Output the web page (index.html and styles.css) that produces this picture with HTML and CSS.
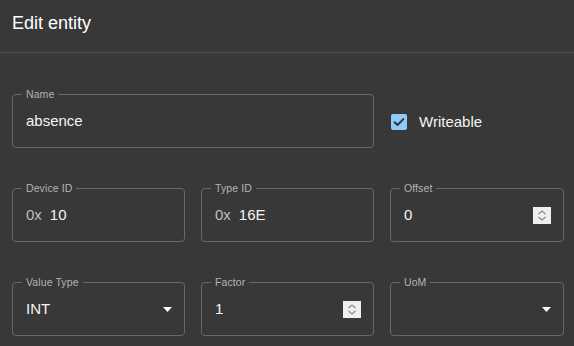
FILE: index.html
```html
<!DOCTYPE html>
<html lang="en">
<head>
<meta charset="utf-8">
<title>Edit entity</title>
<link rel="stylesheet" href="styles.css">
</head>
<body>
<div class="dialog">
  <header class="title">Edit entity</header>
  <main class="form">
    <div class="field span2">
      <span class="label">Name</span>
      <span class="value">absence</span>
    </div>
    <label class="check">
      <span class="box">
        <svg width="16" height="16" viewBox="0 0 16 16"><path d="M3.6 8.2 6.5 11 12.4 5.1" fill="none" stroke="#2f3338" stroke-width="1.9" stroke-linecap="round" stroke-linejoin="round"/></svg>
      </span>
      <span class="check-text">Writeable</span>
    </label>

    <div class="field">
      <span class="label">Device ID</span>
      <span class="prefix">0x</span><span class="value">10</span>
    </div>
    <div class="field">
      <span class="label">Type ID</span>
      <span class="prefix">0x</span><span class="value">16E</span>
    </div>
    <div class="field">
      <span class="label">Offset</span>
      <span class="value grow">0</span>
      <span class="spin"><svg width="18" height="17" viewBox="0 0 18 17"><path d="M5.5 7 9 4 12.5 7M5.5 10 9 13 12.5 10" fill="none" stroke="#8a8a8f" stroke-width="1.2"/></svg></span>
    </div>

    <div class="field">
      <span class="label">Value Type</span>
      <span class="value grow">INT</span>
      <svg class="arrow" width="9" height="5" viewBox="0 0 9 5"><path d="M0 0h9L4.5 5z" fill="#fff"/></svg>
    </div>
    <div class="field">
      <span class="label">Factor</span>
      <span class="value grow">1</span>
      <span class="spin"><svg width="18" height="17" viewBox="0 0 18 17"><path d="M5.5 7 9 4 12.5 7M5.5 10 9 13 12.5 10" fill="none" stroke="#8a8a8f" stroke-width="1.2"/></svg></span>
    </div>
    <div class="field">
      <span class="label">UoM</span>
      <span class="value grow"></span>
      <svg class="arrow" width="9" height="5" viewBox="0 0 9 5"><path d="M0 0h9L4.5 5z" fill="#fff"/></svg>
    </div>
  </main>
</div>
</body>
</html>
```

FILE: styles.css
```css
html, body {
  margin: 0;
  padding: 0;
  background: #383838;
  color: #fff;
  font-family: "Liberation Sans", Arial, sans-serif;
}

.dialog {
  width: 574px;
  height: 346px;
  overflow: hidden;
}

.title {
  box-sizing: border-box;
  height: 53px;
  padding: 12px 12px 0;
  font-size: 18px;
  line-height: 22px;
  border-bottom: 1px solid #525252;
}

.form {
  display: grid;
  grid-template-columns: 173px 173px 1fr;
  column-gap: 16px;
  row-gap: 40px;
  padding: 41px 10px 0 12px;
}

.field {
  position: relative;
  box-sizing: border-box;
  height: 54px;
  border: 1px solid #686868;
  border-radius: 4px;
  padding: 0 12px 0 13px;
  display: flex;
  align-items: center;
}

.span2 {
  grid-column: span 2;
}

.label {
  position: absolute;
  top: -7px;
  left: 9px;
  padding: 0 4px;
  background: #383838;
  color: #b3b3b3;
  font-size: 10.5px;
  line-height: 13px;
  letter-spacing: 0.1px;
}

.value {
  font-size: 15px;
  line-height: 18px;
  color: #f4f4f4;
}

.prefix {
  font-size: 15px;
  line-height: 18px;
  color: #bdbdbd;
  margin-right: 8px;
}

.grow {
  flex: 1;
}

.spin {
  display: block;
  width: 18px;
  height: 17px;
  background: #efeff2;
  margin-right: 0;
}

.spin svg {
  display: block;
}

.arrow {
  display: block;
  margin-right: 0;
}

.check {
  display: flex;
  align-items: center;
  padding-left: 1px;
  padding-top: 1px;
}

.box {
  box-sizing: border-box;
  width: 16px;
  height: 16px;
  border-radius: 2px;
  background: #90caf9;
  display: block;
}

.box svg {
  display: block;
}

.check-text {
  margin-left: 12px;
  font-size: 15px;
  line-height: 18px;
  color: #f4f4f4;
}
```
